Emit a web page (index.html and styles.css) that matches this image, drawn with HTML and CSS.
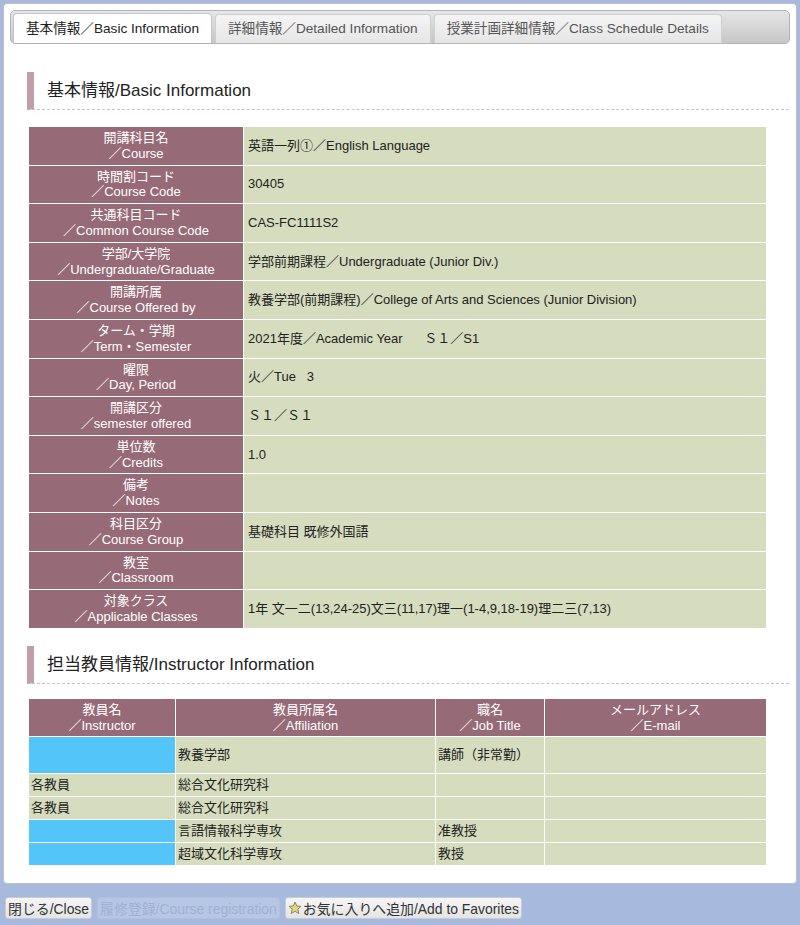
FILE: index.html
```html
<!DOCTYPE html>
<html lang="ja">
<head>
    <meta charset="UTF-8">
    <title>シラバス詳細</title>
    <link rel="stylesheet" href="styles.css">
</head>
<body>

    <div class="panel">
        <div class="tabs">
            <div class="tablinks active">基本情報／Basic Information</div>
            <div class="tablinks">詳細情報／Detailed Information</div>
            <div class="tablinks">授業計画詳細情報／Class Schedule Details</div>
        </div>

        <div class="tabcontent">
            <h2 class="section_title">基本情報/Basic Information</h2>
            <table class="info_table">
                <tr><th>開講科目名<br>／Course</th><td>英語一列①／English Language</td></tr>
                <tr><th>時間割コード<br>／Course Code</th><td>30405</td></tr>
                <tr><th>共通科目コード<br>／Common Course Code</th><td>CAS-FC1111S2</td></tr>
                <tr><th>学部/大学院<br>／Undergraduate/Graduate</th><td>学部前期課程／Undergraduate (Junior Div.)</td></tr>
                <tr><th>開講所属<br>／Course Offered by</th><td>教養学部(前期課程)／College of Arts and Sciences (Junior Division)</td></tr>
                <tr><th>ターム・学期<br>／Term・Semester</th><td>2021年度／Academic Year&nbsp;&nbsp;&nbsp;&nbsp;&nbsp;&nbsp;Ｓ１／S1</td></tr>
                <tr><th>曜限<br>／Day, Period</th><td>火／Tue&nbsp;&nbsp;&nbsp;3</td></tr>
                <tr><th>開講区分<br>／semester offered</th><td>Ｓ１／Ｓ１</td></tr>
                <tr><th>単位数<br>／Credits</th><td>1.0</td></tr>
                <tr><th>備考<br>／Notes</th><td></td></tr>
                <tr><th>科目区分<br>／Course Group</th><td>基礎科目 既修外国語</td></tr>
                <tr><th>教室<br>／Classroom</th><td></td></tr>
                <tr><th>対象クラス<br>／Applicable Classes</th><td>1年 文一二(13,24-25)文三(11,17)理一(1-4,9,18-19)理二三(7,13)</td></tr>
            </table>

            <h2 class="section_title">担当教員情報/Instructor Information</h2>
            <table class="teacher_table">
                <tr>
                    <th class="col_name">教員名<br>／Instructor</th>
                    <th class="col_aff">教員所属名<br>／Affiliation</th>
                    <th class="col_job">職名<br>／Job Title</th>
                    <th>メールアドレス<br>／E-mail</th>
                </tr>
                <tr class="tall_row"><td class="hidden_name"></td><td>教養学部</td><td>講師（非常勤）</td><td></td></tr>
                <tr><td>各教員</td><td>総合文化研究科</td><td></td><td></td></tr>
                <tr><td>各教員</td><td>総合文化研究科</td><td></td><td></td></tr>
                <tr><td class="hidden_name"></td><td>言語情報科学専攻</td><td>准教授</td><td></td></tr>
                <tr><td class="hidden_name"></td><td>超域文化科学専攻</td><td>教授</td><td></td></tr>
            </table>
        </div>
    </div>

    <div class="buttons">
        <button class="btn">閉じる/Close</button>
        <button class="btn" disabled>履修登録/Course registration</button>
        <button class="btn"><svg class="star" width="14" height="14" viewBox="0 0 14 14"><polygon points="7,1 8.8,5 13,5.3 9.8,8.2 10.8,12.6 7,10.3 3.2,12.6 4.2,8.2 1,5.3 5.2,5" fill="#dfd873" stroke="#8c8a6e" stroke-width="1" stroke-linejoin="round"/></svg>お気に入りへ追加/Add to Favorites</button>
    </div>

</body>
</html>
```

FILE: styles.css
```css
body {
    margin: 0;
    padding: 3px 0 0;
    background-color: #a7badd;
    font-family: "Liberation Sans", "Noto Sans CJK JP", sans-serif;
    color: #222;
}

/* outer white panel */
.panel {
    margin: 0 3px;
    padding: 6px 6px 17px;
    background-color: #fff;
    border: 1px solid #b9bfc9;
    border-radius: 4px;
}

/* tab bar */
.tabs {
    display: flex;
    gap: 3px;
    height: 30px;
    padding: 2px 2px 0;
    border: 1px solid #b4b4b4;
    border-radius: 5px;
    background: linear-gradient(#e6e6e6, #c6c6c6);
}
.tablinks {
    padding: 0 12px;
    margin-top: 1px;
    line-height: 28px;
    font-size: 13.6px;
    color: #555;
    background: linear-gradient(#f4f4f4, #e6e6e6);
    border: 1px solid #cfcfcf;
    border-bottom: none;
    border-radius: 4px 4px 0 0;
    white-space: nowrap;
}
.tablinks.active {
    margin-top: 0;
    line-height: 30px;
    color: #222;
    background: #fff;
    border-color: #c4c4c4;
}

.tabcontent {
    padding: 28px 1px 0 17px;
}

.section_title {
    margin: 0;
    height: 37px;
    line-height: 37px;
    padding-left: 13px;
    font-size: 17px;
    font-weight: normal;
    color: #222;
    border-left: 7px solid #c29ea8;
    border-bottom: 1px dashed #c6c6c6;
}

/* tables */
.info_table,
.teacher_table {
    width: 739px;
    margin: 16px 0 17px 1px;
    border-collapse: collapse;
    font-size: 13px;
}
.teacher_table {
    margin: 14px 0 0 1px;
}
.info_table th,
.info_table td,
.teacher_table th,
.teacher_table td {
    border: 1px solid #fff;
    padding: 3px 4px;
    line-height: 15.8px;
}
.info_table th,
.teacher_table th {
    background-color: #976a77;
    color: #fff;
    font-weight: normal;
    text-align: center;
}
.info_table th {
    width: 206px;
}
.info_table td,
.teacher_table td {
    background-color: #d6dcbe;
    text-align: left;
    vertical-align: middle;
}
.teacher_table td {
    padding: 3px 2px;
    line-height: 16px;
}
.teacher_table .tall_row td {
    height: 30px;
}
.col_name { width: 138px; }
.col_aff { width: 251px; }
.col_job { width: 100px; }

.teacher_table td.hidden_name {
    background-color: #54c5f8;
}

/* bottom buttons */
.buttons {
    display: flex;
    gap: 5px;
    padding: 13px 5px 0;
}
.btn {
    display: flex;
    align-items: center;
    height: 22px;
    padding: 0 2px;
    font-family: inherit;
    font-size: 13.9px;
    color: #333;
    background: linear-gradient(#f6f6f6, #e4e4e4);
    border: 1px solid #c8ccd4;
    border-radius: 3px;
}
.btn:disabled {
    color: #9fb1d3;
    background: #b6c6e4;
    border-color: #b0c0de;
}
.star {
    margin-right: 1px;
}
```
